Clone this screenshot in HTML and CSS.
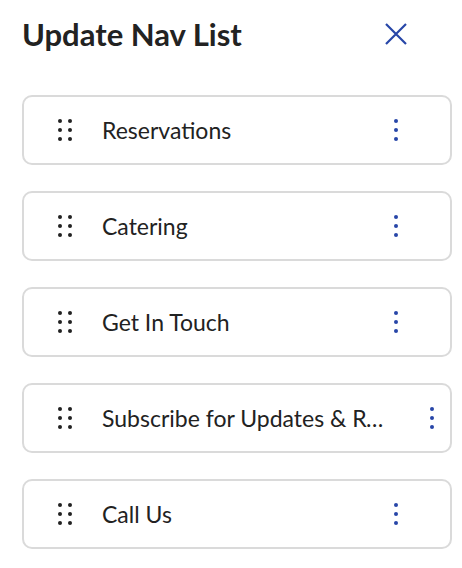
FILE: index.html
```html
<!DOCTYPE html>
<html lang="en">
<head>
<meta charset="utf-8">
<title>Update Nav List</title>
<link rel="stylesheet" href="styles.css">
</head>
<body>
<div class="panel">
  <div class="header">
    <h1 class="title">Update Nav List</h1>
    <button class="close" aria-label="Close">
      <svg width="22" height="22" viewBox="0 0 22 22"><path d="M1 1 L21 21 M21 1 L1 21" stroke="currentColor" stroke-width="2.2" fill="none"/></svg>
    </button>
  </div>
  <ul class="list">
    <li class="item">
      <svg class="handle" width="14" height="22" viewBox="0 0 14 22"><circle cx="2" cy="2" r="2"/><circle cx="12" cy="2" r="2"/><circle cx="2" cy="11" r="2"/><circle cx="12" cy="11" r="2"/><circle cx="2" cy="20" r="2"/><circle cx="12" cy="20" r="2"/></svg>
      <span class="label">Reservations</span>
      <span class="fill"></span>
      <span class="kebab-slot"><svg class="kebab" width="4" height="22" viewBox="0 0 4 22"><circle cx="2" cy="2" r="2"/><circle cx="2" cy="11" r="2"/><circle cx="2" cy="20" r="2"/></svg></span>
    </li>
    <li class="item">
      <svg class="handle" width="14" height="22" viewBox="0 0 14 22"><circle cx="2" cy="2" r="2"/><circle cx="12" cy="2" r="2"/><circle cx="2" cy="11" r="2"/><circle cx="12" cy="11" r="2"/><circle cx="2" cy="20" r="2"/><circle cx="12" cy="20" r="2"/></svg>
      <span class="label">Catering</span>
      <span class="fill"></span>
      <span class="kebab-slot"><svg class="kebab" width="4" height="22" viewBox="0 0 4 22"><circle cx="2" cy="2" r="2"/><circle cx="2" cy="11" r="2"/><circle cx="2" cy="20" r="2"/></svg></span>
    </li>
    <li class="item">
      <svg class="handle" width="14" height="22" viewBox="0 0 14 22"><circle cx="2" cy="2" r="2"/><circle cx="12" cy="2" r="2"/><circle cx="2" cy="11" r="2"/><circle cx="12" cy="11" r="2"/><circle cx="2" cy="20" r="2"/><circle cx="12" cy="20" r="2"/></svg>
      <span class="label">Get In Touch</span>
      <span class="fill"></span>
      <span class="kebab-slot"><svg class="kebab" width="4" height="22" viewBox="0 0 4 22"><circle cx="2" cy="2" r="2"/><circle cx="2" cy="11" r="2"/><circle cx="2" cy="20" r="2"/></svg></span>
    </li>
    <li class="item">
      <svg class="handle" width="14" height="22" viewBox="0 0 14 22"><circle cx="2" cy="2" r="2"/><circle cx="12" cy="2" r="2"/><circle cx="2" cy="11" r="2"/><circle cx="12" cy="11" r="2"/><circle cx="2" cy="20" r="2"/><circle cx="12" cy="20" r="2"/></svg>
      <span class="label">Subscribe for Updates &amp; Reservations</span>
      <span class="fill"></span>
      <span class="kebab-slot"><svg class="kebab" width="4" height="22" viewBox="0 0 4 22"><circle cx="2" cy="2" r="2"/><circle cx="2" cy="11" r="2"/><circle cx="2" cy="20" r="2"/></svg></span>
    </li>
    <li class="item">
      <svg class="handle" width="14" height="22" viewBox="0 0 14 22"><circle cx="2" cy="2" r="2"/><circle cx="12" cy="2" r="2"/><circle cx="2" cy="11" r="2"/><circle cx="12" cy="11" r="2"/><circle cx="2" cy="20" r="2"/><circle cx="12" cy="20" r="2"/></svg>
      <span class="label">Call Us</span>
      <span class="fill"></span>
      <span class="kebab-slot"><svg class="kebab" width="4" height="22" viewBox="0 0 4 22"><circle cx="2" cy="2" r="2"/><circle cx="2" cy="11" r="2"/><circle cx="2" cy="20" r="2"/></svg></span>
    </li>
  </ul>
</div>
</body>
</html>
```
FILE: styles.css
```css
* { box-sizing: border-box; }
html, body {
  margin: 0;
  padding: 0;
  background: #ffffff;
}
body {
  font-family: "Lato", "Noto Sans", sans-serif;
  color: #222222;
}
.panel {
  padding: 11px 10px 0 22px;
}
.header {
  display: flex;
  align-items: center;
  justify-content: space-between;
  height: 46px;
  margin-bottom: 38px;
}
.title {
  margin: 0;
  font-size: 31px;
  font-weight: 700;
  line-height: 46px;
  color: #222222;
}
.close {
  border: 0;
  background: none;
  padding: 0;
  margin-right: 45px;
  color: #2746a8;
  width: 22px;
  height: 22px;
  display: flex;
}
.list {
  list-style: none;
  margin: 0;
  padding: 0;
  display: flex;
  flex-direction: column;
  gap: 26px;
}
.item {
  display: flex;
  align-items: center;
  height: 70px;
  border: 2px solid #dadada;
  border-radius: 10px;
  padding: 0 16px 0 34px;
}
.handle {
  flex: none;
  fill: #222222;
}
.label {
  flex: 0 0 auto;
  max-width: 288px;
  margin-left: 30px;
  font-size: 23px;
  white-space: nowrap;
  overflow: hidden;
  text-overflow: ellipsis;
}
.fill {
  flex: 1 0 40px;
}
.kebab-slot {
  flex: 0 1 40px;
  min-width: 4px;
  display: flex;
}
.kebab {
  fill: #2746a8;
  flex: none;
}
```
